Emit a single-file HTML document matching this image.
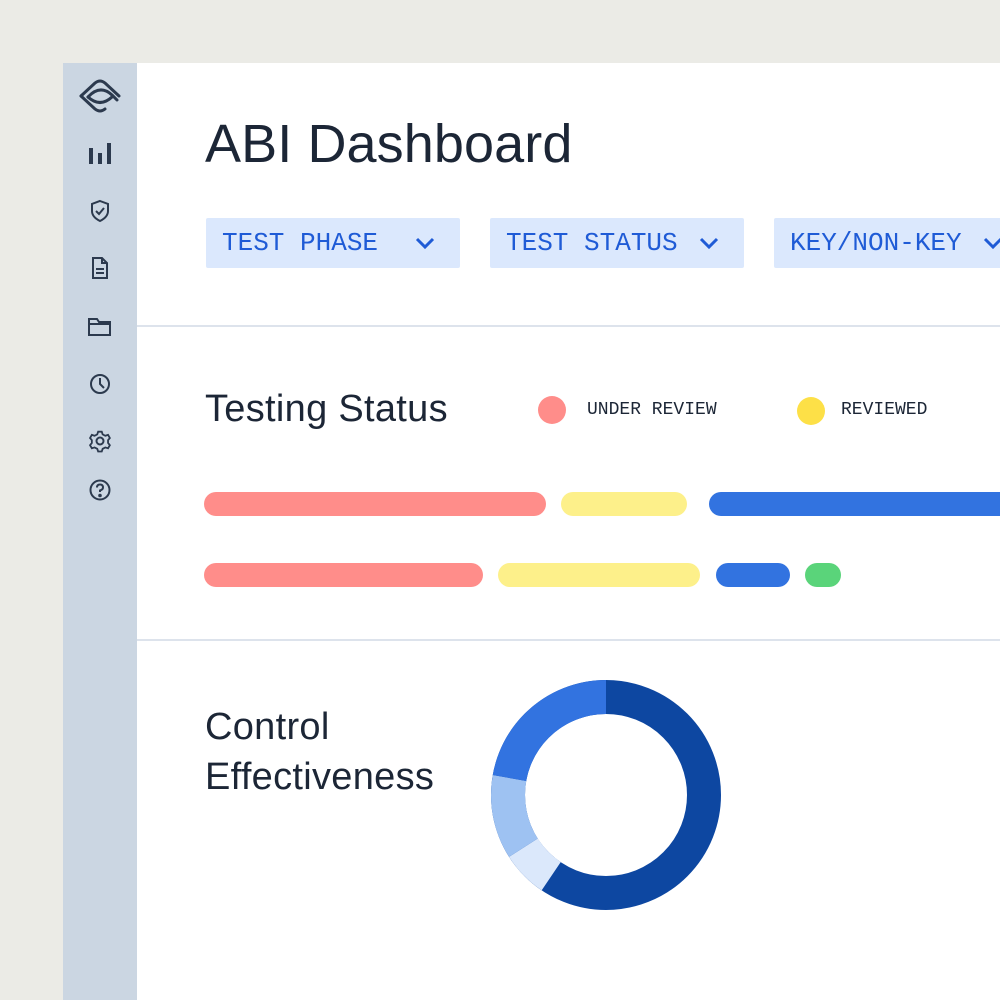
<!DOCTYPE html>
<html><head><style>
body{margin:0;width:1000px;height:1000px;background:#ebebe6;position:relative;overflow:hidden;font-family:"Liberation Sans",sans-serif}
.side{position:absolute;left:63px;top:63px;width:74px;height:937px;background:#cbd6e2}
.main{position:absolute;left:137px;top:63px;width:863px;height:937px;background:#fff}
.t{position:absolute;color:#1c2636}
.dd{position:absolute;top:218px;height:50px;width:254px;background:#dbe8fd;border-radius:2px;color:#1f5bd6;font-family:"Liberation Mono",monospace;font-size:26px;line-height:50px;box-sizing:border-box;padding-left:16px}
.dd svg{position:absolute;top:17px}
.hr{position:absolute;left:137px;width:863px;height:2px;background:#dde3ec}
.bar{position:absolute;height:24px;border-radius:12px}
.lg{position:absolute;font-family:"Liberation Mono",monospace;font-size:18px;color:#1c2636;top:400px}
.ic{position:absolute;left:86px}
</style></head><body>
<div class="side"></div><div class="main"></div>
<svg class="ic" style="left:78px;top:78px" width="44" height="36" viewBox="0 0 44 36" fill="none" stroke="#2c3a4e" stroke-width="3" stroke-linecap="round"><path d="M3 18 L17 5 Q22 1 27 5 L41 18"/><path d="M3 18 L17 31 Q22 35 27 31"/><path d="M10 19 Q22 6 34 17 L39 22"/><path d="M10 19 Q22 30 34 19"/></svg>
<svg class="ic" style="top:142px" width="28" height="22" viewBox="0 0 28 22" fill="#2c3a4e"><rect x="3" y="6" width="4" height="16"/><rect x="12" y="11" width="4" height="11"/><rect x="21" y="1" width="4" height="21"/></svg>
<svg class="ic" style="top:199px" width="28" height="24" viewBox="0 0 28 24" fill="none" stroke="#2c3a4e" stroke-width="2"><path d="M14 2 L22 5 V12 Q22 18 14 22 Q6 18 6 12 V5 Z"/><path d="M10 12 L13 15 L18 9"/></svg>
<svg class="ic" style="top:256px" width="28" height="24" viewBox="0 0 28 24" fill="none" stroke="#2c3a4e" stroke-width="2"><path d="M7 2 H16 L21 7 V22 H7 Z M16 2 V7 H21"/><path d="M10 13 H18 M10 17 H18"/></svg>
<svg class="ic" style="top:315px" width="28" height="24" viewBox="0 0 28 24" fill="none" stroke="#2c3a4e" stroke-width="2"><path d="M3 4 H11 L13 7 H24 V20 H3 Z M3 9 H24"/></svg>
<svg class="ic" style="top:372px" width="28" height="24" viewBox="0 0 28 24" fill="none" stroke="#2c3a4e" stroke-width="2"><circle cx="14" cy="12" r="9"/><path d="M14 6 V12 L18 16"/></svg>
<svg class="ic" style="top:429px" width="28" height="24" viewBox="0 0 28 24" fill="none" stroke="#2c3a4e" stroke-width="2"><path d="M12 2h4l1 3 3 1.5 3-1 2 3.5-2 2.5v3l2 2.5-2 3.5-3-1-3 1.5-1 3h-4l-1-3-3-1.5-3 1-2-3.5 2-2.5v-3l-2-2.5 2-3.5 3 1 3-1.5z" transform="scale(0.9) translate(1.5 1)"/><circle cx="14" cy="12" r="3.5"/></svg>
<svg class="ic" style="top:478px" width="28" height="24" viewBox="0 0 28 24" fill="none" stroke="#2c3a4e" stroke-width="2"><circle cx="14" cy="12" r="9.5"/><path d="M11 9.5 Q11 6.5 14 6.5 Q17 6.5 17 9.5 Q17 11.5 14 12.5 V14" /><circle cx="14" cy="17.5" r="0.8" fill="#2c3a4e"/></svg>
<div class="t" style="left:205px;top:113px;font-size:54px;letter-spacing:0.1px">ABI Dashboard</div>
<div class="dd" style="left:206px">TEST PHASE<svg style="left:208px" width="22" height="16" viewBox="0 0 22 16" fill="none" stroke="#1f5bd6" stroke-width="3"><path d="M3 4 L11 12 L19 4"/></svg></div>
<div class="dd" style="left:490px">TEST STATUS<svg style="left:208px" width="22" height="16" viewBox="0 0 22 16" fill="none" stroke="#1f5bd6" stroke-width="3"><path d="M3 4 L11 12 L19 4"/></svg></div>
<div class="dd" style="left:774px">KEY/NON-KEY<svg style="left:208px" width="22" height="16" viewBox="0 0 22 16" fill="none" stroke="#1f5bd6" stroke-width="3"><path d="M3 4 L11 12 L19 4"/></svg></div>
<div class="hr" style="top:325px"></div>
<div class="hr" style="top:639px"></div>
<div class="t" style="left:205px;top:388px;font-size:38px;letter-spacing:0.3px">Testing Status</div>
<div style="position:absolute;left:538px;top:396px;width:28px;height:28px;border-radius:50%;background:#ff8d8a"></div>
<div class="lg" style="left:587px">UNDER REVIEW</div>
<div style="position:absolute;left:797px;top:397px;width:28px;height:28px;border-radius:50%;background:#fde047"></div>
<div class="lg" style="left:841px">REVIEWED</div>
<div class="bar" style="top:492px;left:204px;width:342px;background:#ff8d8a"></div>
<div class="bar" style="top:492px;left:561px;width:126px;background:#fdf08a"></div>
<div class="bar" style="top:492px;left:709px;width:320px;background:#3273e0"></div>
<div class="bar" style="top:563px;left:204px;width:279px;background:#ff8d8a"></div>
<div class="bar" style="top:563px;left:498px;width:202px;background:#fdf08a"></div>
<div class="bar" style="top:563px;left:716px;width:74px;background:#3273e0"></div>
<div class="bar" style="top:563px;left:805px;width:36px;background:#5ad47a"></div>
<div class="t" style="left:205px;top:702px;font-size:38px;line-height:50px;letter-spacing:0.3px">Control<br>Effectiveness</div>
<svg style="position:absolute;left:0;top:0" width="1000" height="1000">
<g fill="none" stroke-width="34" transform="translate(606 795)">
<circle r="98" stroke="#0d47a1"/>
<path d="M-54.8 81.2 A98 98 0 0 1 -82.6 52.7" stroke="#dbe8fb"/>
<path d="M-82.6 52.7 A98 98 0 0 1 -96.5 -17" stroke="#9ec2f2"/>
<path d="M-96.5 -17 A98 98 0 0 1 0 -98" stroke="#3273e0"/>
</g></svg>
</body></html>
